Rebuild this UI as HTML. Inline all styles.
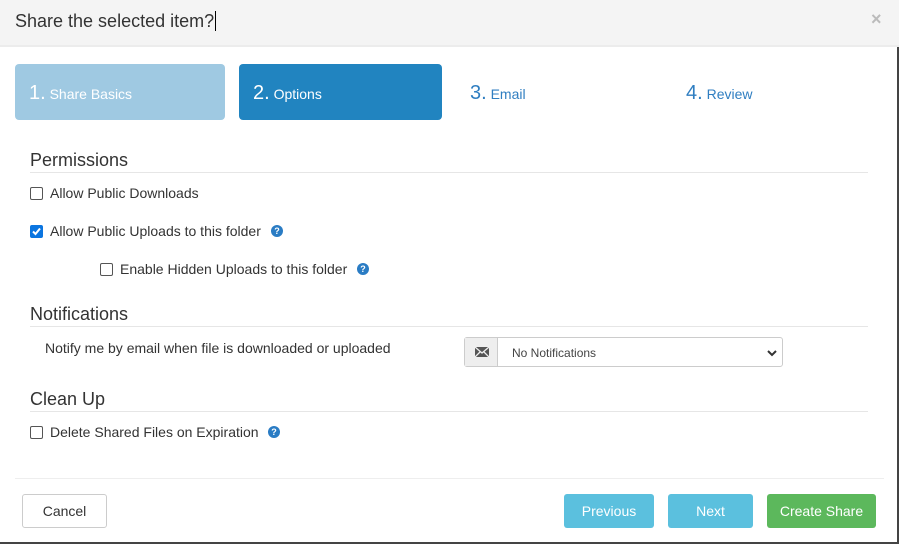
<!DOCTYPE html>
<html><head><meta charset="utf-8"><style>
*{box-sizing:border-box;margin:0;padding:0}
body{width:899px;height:544px;background:#fff;font-family:"Liberation Sans",Arial,sans-serif;color:#333;position:relative;overflow:hidden}
.hdr{position:absolute;left:0;top:0;width:899px;height:47px;background:#f4f4f4;border-bottom:2px solid #ececec}
.hdr h1{position:absolute;left:15px;top:11px;font-size:18px;font-weight:normal;color:#333}
.cursor{display:inline-block;width:1px;height:20px;background:#000;vertical-align:-4px;margin-left:1px}
.x{position:absolute;left:871px;top:9px;font-size:18px;color:#bbb;font-weight:bold}
.rb{position:absolute;left:897px;top:47px;width:2px;height:497px;background:#444}
.bb{position:absolute;left:0;top:542px;width:899px;height:2px;background:#444}
.step{position:absolute;top:64px;height:56px;border-radius:4px;color:#fff;padding:18px 0 0 14px;font-size:14px}
.step b{font-weight:normal;font-size:20px}
.s1{left:15px;width:210px;background:#9fc9e2}
.s2{left:239px;width:203px;background:#2184c0}
.s3{left:456px;background:none;color:#2f7ec1}
.s4{left:672px;background:none;color:#2f7ec1}
.sec{position:absolute;left:30px;font-size:18px;color:#333}
.line{position:absolute;left:30px;width:838px;height:1px;background:#e6e6e6}
.cb{position:absolute;width:13px;height:13px;border:1px solid #555;border-radius:2px;background:#fff}
.cb.on{background:#0b75e0;border-color:#0b75e0}
.lbl{position:absolute;font-size:14px;color:#333}
.q{position:absolute;width:12px;height:12px;border-radius:50%;background:#2a7cc4;color:#fff;font-size:9px;font-weight:bold;text-align:center;line-height:12px}
.grp{position:absolute;left:464px;top:337px;width:319px;height:30px;border:1px solid #ccc;border-radius:3px}
.addon{position:absolute;left:0;top:0;width:33px;height:28px;background:#eee;border-right:1px solid #ccc}
.sel{position:absolute;left:47px;top:8px;font-size:12px;color:#444}
.btn{position:absolute;top:494px;height:34px;border-radius:3px;color:#fff;font-size:14px;text-align:center;line-height:34px}
</style></head><body>
<div class="hdr"><h1>Share the selected item?<span class="cursor"></span></h1><div class="x">×</div></div>
<div class="rb"></div><div class="bb"></div>
<div class="step s1"><b>1.</b> Share Basics</div>
<div class="step s2"><b>2.</b> Options</div>
<div class="step s3"><b>3.</b> Email</div>
<div class="step s4"><b>4.</b> Review</div>

<div class="sec" style="top:150px">Permissions</div>
<div class="line" style="top:172px"></div>
<div class="cb" style="left:30px;top:187px"></div>
<div class="lbl" style="left:50px;top:185px">Allow Public Downloads</div>
<div class="cb on" style="left:30px;top:225px"><svg width="11" height="11" viewBox="0 0 11 11" style="position:absolute;left:0;top:0"><path d="M2 5.5 L4.5 8 L9 2.5" stroke="#fff" stroke-width="2" fill="none"/></svg></div>
<div class="lbl" style="left:50px;top:223px">Allow Public Uploads to this folder</div>
<div class="q" style="left:271px;top:225px">?</div>
<div class="cb" style="left:100px;top:263px"></div>
<div class="lbl" style="left:120px;top:261px">Enable Hidden Uploads to this folder</div>
<div class="q" style="left:357px;top:263px">?</div>

<div class="sec" style="top:304px">Notifications</div>
<div class="line" style="top:326px"></div>
<div class="lbl" style="left:45px;top:340px">Notify me by email when file is downloaded or uploaded</div>
<div class="grp"><div class="addon"><svg width="14" height="10" viewBox="0 0 14 10" style="position:absolute;left:10px;top:9px"><rect width="14" height="10" fill="#555"/><path d="M0 0 L7 6 L14 0 M0 10 L5 5 M14 10 L9 5" stroke="#eee" stroke-width="1.3" fill="none"/></svg></div>
<div class="sel">No Notifications</div>
<svg width="10" height="8" viewBox="0 0 10 8" style="position:absolute;left:302px;top:11px"><path d="M1 2 L5 6 L9 2" stroke="#333" stroke-width="2" fill="none"/></svg></div>

<div class="sec" style="top:389px">Clean Up</div>
<div class="line" style="top:411px"></div>
<div class="cb" style="left:30px;top:426px"></div>
<div class="lbl" style="left:50px;top:424px">Delete Shared Files on Expiration</div>
<div class="q" style="left:268px;top:426px">?</div>

<div class="line" style="left:15px;width:869px;top:478px;background:#eee"></div>
<div class="btn" style="left:22px;width:85px;border:1px solid #ccc;color:#333;background:#fff;line-height:32px">Cancel</div>
<div class="btn" style="left:564px;width:90px;background:#5bc0de">Previous</div>
<div class="btn" style="left:668px;width:85px;background:#5bc0de">Next</div>
<div class="btn" style="left:767px;width:109px;background:#5cb85c">Create Share</div>
</body></html>
